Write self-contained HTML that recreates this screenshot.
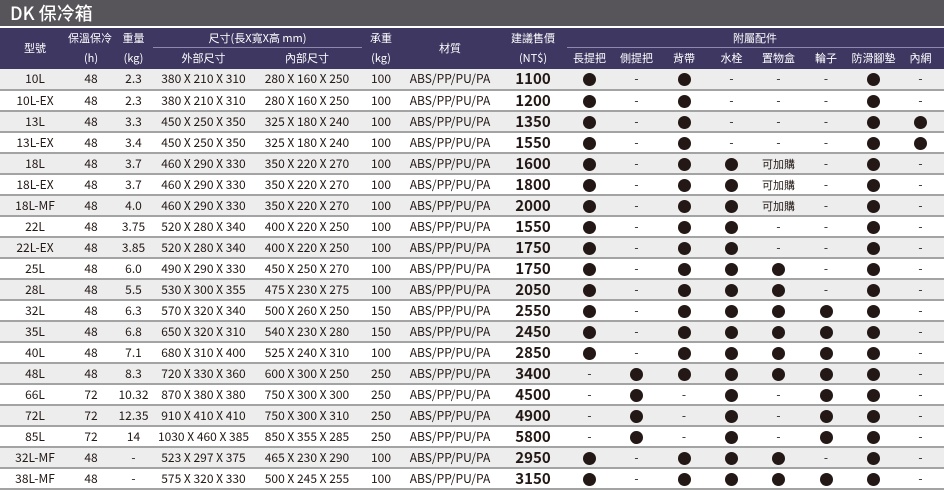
<!DOCTYPE html>
<html><head><meta charset="utf-8">
<style>
*{margin:0;padding:0;box-sizing:border-box}
body{width:944px;height:489px;overflow:hidden;background:#fff;font-family:"Liberation Sans","Noto Sans CJK TC",sans-serif;color:#231815;position:relative}
.title{position:absolute;left:0;top:0;width:944px;height:26px;background:#58555a;color:#fff;font-family:"Noto Sans CJK TC",sans-serif;font-size:18px;font-weight:500;line-height:26px;padding-left:10px}
.hdr{position:absolute;left:0;top:28px;width:944px;height:41px;background:#3e3762;color:#fff;font-family:"Noto Sans CJK TC",sans-serif;font-size:11px}
.h{position:absolute;text-align:center;line-height:20px;white-space:nowrap}
.line{position:absolute;height:1px;background:#8f8aab;top:19px}
table{position:absolute;left:0;top:69px;width:944px;border-collapse:collapse;table-layout:fixed}
td{height:21px;border-bottom:2px solid #a3a3a3;text-align:center;font-size:12px;font-family:"Noto Sans CJK TC",sans-serif;padding:0;line-height:18px;white-space:nowrap}
tr:nth-child(odd) td{background:#ededed}
td.p{font-weight:bold;font-size:15px;font-family:"Noto Sans CJK TC","Liberation Sans",sans-serif}
.d{display:inline-block;width:13px;height:13px;border-radius:50%;background:#231815;vertical-align:middle}
td.s{font-size:11px}
</style></head><body>
<div class="title">DK 保冷箱</div>
<div class="hdr">
<div class="h" style="left:0;width:70px;top:10px">型號</div>
<div class="h" style="left:62px;width:56px;top:0">保溫保冷</div>
<div class="h" style="left:70px;width:42px;top:20px">(h)</div>
<div class="h" style="left:112px;width:43px;top:0">重量</div>
<div class="h" style="left:112px;width:43px;top:20px">(kg)</div>
<div class="h" style="left:153px;width:209px;top:0">尺寸(長X寬X高 mm)</div>
<div class="line" style="left:153px;width:209px"></div>
<div class="h" style="left:155px;width:97px;top:20px">外部尺寸</div>
<div class="h" style="left:252px;width:110px;top:20px">內部尺寸</div>
<div class="h" style="left:362px;width:38px;top:0">承重</div>
<div class="h" style="left:362px;width:38px;top:20px">(kg)</div>
<div class="h" style="left:400px;width:100px;top:10px">材質</div>
<div class="h" style="left:500px;width:66px;top:0">建議售價</div>
<div class="h" style="left:500px;width:66px;top:20px">(NT$)</div>
<div class="h" style="left:566px;width:378px;top:0">附屬配件</div>
<div class="line" style="left:567px;width:377px"></div>
<div class="h" style="left:566px;width:47px;top:20px">長提把</div>
<div class="h" style="left:613px;width:47px;top:20px">側提把</div>
<div class="h" style="left:660px;width:48px;top:20px">背帶</div>
<div class="h" style="left:708px;width:47px;top:20px">水栓</div>
<div class="h" style="left:755px;width:47px;top:20px">置物盒</div>
<div class="h" style="left:802px;width:48px;top:20px">輪子</div>
<div class="h" style="left:850px;width:47px;top:20px">防滑腳墊</div>
<div class="h" style="left:897px;width:47px;top:20px">內網</div>
</div>
<table>
<colgroup><col style="width:70px"><col style="width:42px"><col style="width:43px"><col style="width:97px"><col style="width:110px"><col style="width:38px"><col style="width:100px"><col style="width:66px"><col style="width:47px"><col style="width:47px"><col style="width:48px"><col style="width:47px"><col style="width:47px"><col style="width:48px"><col style="width:47px"><col style="width:47px"></colgroup>
<tr><td>10L</td><td>48</td><td>2.3</td><td>380 X 210 X 310</td><td>280 X 160 X 250</td><td>100</td><td>ABS/PP/PU/PA</td><td class="p">1100</td><td><i class="d"></i></td><td>-</td><td><i class="d"></i></td><td>-</td><td>-</td><td>-</td><td><i class="d"></i></td><td>-</td></tr>
<tr><td>10L-EX</td><td>48</td><td>2.3</td><td>380 X 210 X 310</td><td>280 X 160 X 250</td><td>100</td><td>ABS/PP/PU/PA</td><td class="p">1200</td><td><i class="d"></i></td><td>-</td><td><i class="d"></i></td><td>-</td><td>-</td><td>-</td><td><i class="d"></i></td><td>-</td></tr>
<tr><td>13L</td><td>48</td><td>3.3</td><td>450 X 250 X 350</td><td>325 X 180 X 240</td><td>100</td><td>ABS/PP/PU/PA</td><td class="p">1350</td><td><i class="d"></i></td><td>-</td><td><i class="d"></i></td><td>-</td><td>-</td><td>-</td><td><i class="d"></i></td><td><i class="d"></i></td></tr>
<tr><td>13L-EX</td><td>48</td><td>3.4</td><td>450 X 250 X 350</td><td>325 X 180 X 240</td><td>100</td><td>ABS/PP/PU/PA</td><td class="p">1550</td><td><i class="d"></i></td><td>-</td><td><i class="d"></i></td><td>-</td><td>-</td><td>-</td><td><i class="d"></i></td><td><i class="d"></i></td></tr>
<tr><td>18L</td><td>48</td><td>3.7</td><td>460 X 290 X 330</td><td>350 X 220 X 270</td><td>100</td><td>ABS/PP/PU/PA</td><td class="p">1600</td><td><i class="d"></i></td><td>-</td><td><i class="d"></i></td><td><i class="d"></i></td><td class="s">可加購</td><td>-</td><td><i class="d"></i></td><td>-</td></tr>
<tr><td>18L-EX</td><td>48</td><td>3.7</td><td>460 X 290 X 330</td><td>350 X 220 X 270</td><td>100</td><td>ABS/PP/PU/PA</td><td class="p">1800</td><td><i class="d"></i></td><td>-</td><td><i class="d"></i></td><td><i class="d"></i></td><td class="s">可加購</td><td>-</td><td><i class="d"></i></td><td>-</td></tr>
<tr><td>18L-MF</td><td>48</td><td>4.0</td><td>460 X 290 X 330</td><td>350 X 220 X 270</td><td>100</td><td>ABS/PP/PU/PA</td><td class="p">2000</td><td><i class="d"></i></td><td>-</td><td><i class="d"></i></td><td><i class="d"></i></td><td class="s">可加購</td><td>-</td><td><i class="d"></i></td><td>-</td></tr>
<tr><td>22L</td><td>48</td><td>3.75</td><td>520 X 280 X 340</td><td>400 X 220 X 250</td><td>100</td><td>ABS/PP/PU/PA</td><td class="p">1550</td><td><i class="d"></i></td><td>-</td><td><i class="d"></i></td><td><i class="d"></i></td><td>-</td><td>-</td><td><i class="d"></i></td><td>-</td></tr>
<tr><td>22L-EX</td><td>48</td><td>3.85</td><td>520 X 280 X 340</td><td>400 X 220 X 250</td><td>100</td><td>ABS/PP/PU/PA</td><td class="p">1750</td><td><i class="d"></i></td><td>-</td><td><i class="d"></i></td><td><i class="d"></i></td><td>-</td><td>-</td><td><i class="d"></i></td><td>-</td></tr>
<tr><td>25L</td><td>48</td><td>6.0</td><td>490 X 290 X 330</td><td>450 X 250 X 270</td><td>100</td><td>ABS/PP/PU/PA</td><td class="p">1750</td><td><i class="d"></i></td><td>-</td><td><i class="d"></i></td><td><i class="d"></i></td><td><i class="d"></i></td><td>-</td><td><i class="d"></i></td><td>-</td></tr>
<tr><td>28L</td><td>48</td><td>5.5</td><td>530 X 300 X 355</td><td>475 X 230 X 275</td><td>100</td><td>ABS/PP/PU/PA</td><td class="p">2050</td><td><i class="d"></i></td><td>-</td><td><i class="d"></i></td><td><i class="d"></i></td><td><i class="d"></i></td><td>-</td><td><i class="d"></i></td><td>-</td></tr>
<tr><td>32L</td><td>48</td><td>6.3</td><td>570 X 320 X 340</td><td>500 X 260 X 250</td><td>150</td><td>ABS/PP/PU/PA</td><td class="p">2550</td><td><i class="d"></i></td><td>-</td><td><i class="d"></i></td><td><i class="d"></i></td><td><i class="d"></i></td><td><i class="d"></i></td><td><i class="d"></i></td><td>-</td></tr>
<tr><td>35L</td><td>48</td><td>6.8</td><td>650 X 320 X 310</td><td>540 X 230 X 280</td><td>150</td><td>ABS/PP/PU/PA</td><td class="p">2450</td><td><i class="d"></i></td><td>-</td><td><i class="d"></i></td><td><i class="d"></i></td><td><i class="d"></i></td><td><i class="d"></i></td><td><i class="d"></i></td><td>-</td></tr>
<tr><td>40L</td><td>48</td><td>7.1</td><td>680 X 310 X 400</td><td>525 X 240 X 310</td><td>100</td><td>ABS/PP/PU/PA</td><td class="p">2850</td><td><i class="d"></i></td><td>-</td><td><i class="d"></i></td><td><i class="d"></i></td><td><i class="d"></i></td><td><i class="d"></i></td><td><i class="d"></i></td><td>-</td></tr>
<tr><td>48L</td><td>48</td><td>8.3</td><td>720 X 330 X 360</td><td>600 X 300 X 250</td><td>250</td><td>ABS/PP/PU/PA</td><td class="p">3400</td><td>-</td><td><i class="d"></i></td><td><i class="d"></i></td><td><i class="d"></i></td><td><i class="d"></i></td><td><i class="d"></i></td><td><i class="d"></i></td><td>-</td></tr>
<tr><td>66L</td><td>72</td><td>10.32</td><td>870 X 380 X 380</td><td>750 X 300 X 300</td><td>250</td><td>ABS/PP/PU/PA</td><td class="p">4500</td><td>-</td><td><i class="d"></i></td><td>-</td><td><i class="d"></i></td><td>-</td><td><i class="d"></i></td><td><i class="d"></i></td><td>-</td></tr>
<tr><td>72L</td><td>72</td><td>12.35</td><td>910 X 410 X 410</td><td>750 X 300 X 310</td><td>250</td><td>ABS/PP/PU/PA</td><td class="p">4900</td><td>-</td><td><i class="d"></i></td><td>-</td><td><i class="d"></i></td><td>-</td><td><i class="d"></i></td><td><i class="d"></i></td><td>-</td></tr>
<tr><td>85L</td><td>72</td><td>14</td><td>1030 X 460 X 385</td><td>850 X 355 X 285</td><td>250</td><td>ABS/PP/PU/PA</td><td class="p">5800</td><td>-</td><td><i class="d"></i></td><td>-</td><td><i class="d"></i></td><td>-</td><td><i class="d"></i></td><td><i class="d"></i></td><td>-</td></tr>
<tr><td>32L-MF</td><td>48</td><td>-</td><td>523 X 297 X 375</td><td>465 X 230 X 290</td><td>100</td><td>ABS/PP/PU/PA</td><td class="p">2950</td><td><i class="d"></i></td><td>-</td><td><i class="d"></i></td><td><i class="d"></i></td><td><i class="d"></i></td><td>-</td><td><i class="d"></i></td><td>-</td></tr>
<tr><td>38L-MF</td><td>48</td><td>-</td><td>575 X 320 X 330</td><td>500 X 245 X 255</td><td>100</td><td>ABS/PP/PU/PA</td><td class="p">3150</td><td><i class="d"></i></td><td>-</td><td><i class="d"></i></td><td><i class="d"></i></td><td><i class="d"></i></td><td><i class="d"></i></td><td><i class="d"></i></td><td>-</td></tr>
</table>
</body></html>
